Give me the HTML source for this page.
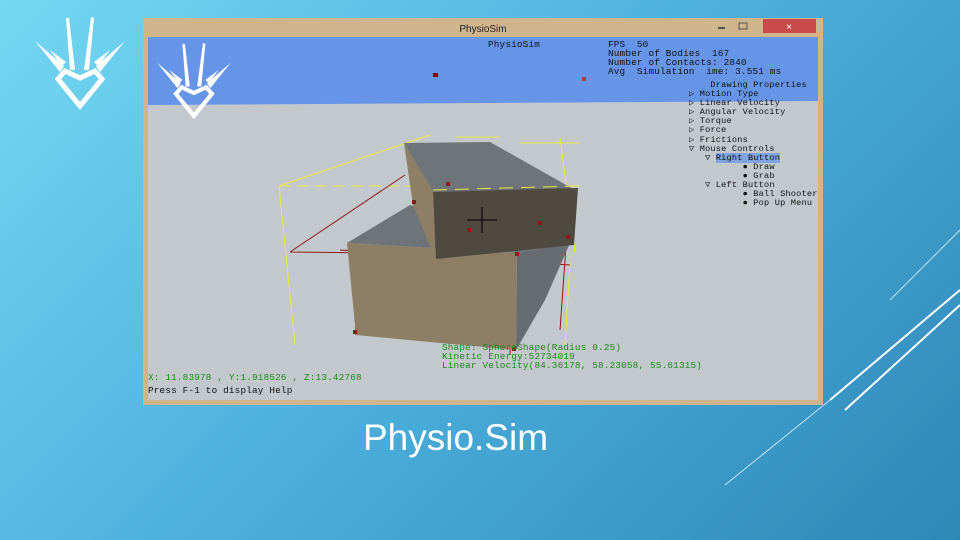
<!DOCTYPE html>
<html><head><style>
html,body{margin:0;padding:0}
body{width:960px;height:540px;overflow:hidden;position:relative;background:linear-gradient(135deg,#74d8f2 0%,#4fb3df 45%,#2f87b6 100%);font-family:"Liberation Sans",sans-serif}
.t{position:absolute;font-family:"Liberation Mono",monospace;font-size:9.3px;white-space:pre;line-height:9.1px;letter-spacing:0.2px}
</style></head><body>
<svg width="960" height="540" style="position:absolute;left:0;top:0">
<defs><g id="logo" fill="#fff" stroke="none">
<path d="M58 79 L65 71 L80 78 L95 71 L102 79 L80 106 Z" fill="none" stroke="#fff" stroke-width="5"/>
<polygon points="66,18 69,18 75,70 70,70"/>
<polygon points="91,17 94,18 89,70 84,70"/>
<polygon points="35,41 64,66 60,72"/>
<polygon points="125,41 96,66 100,72"/>
<polygon points="50,50 66,62 62,66"/>
<polygon points="110,50 94,62 98,66"/>
</g></defs>
<use href="#logo"/>
<g stroke="#fff" stroke-width="2" fill="none">
<path d="M960 290 L830 400 M960 305 L845 410"/>
</g>
<g stroke="#bfe6f5" stroke-width="1" fill="none">
<path d="M960 230 L890 300 M830 400 L725 485"/>
</g>
<rect x="143" y="18" width="680" height="387" fill="#d0b48c"/>
<rect x="763" y="19" width="53" height="14" fill="#c84a4a"/>
<text x="789" y="30" fill="#fff" font-size="10" text-anchor="middle" font-family="Liberation Sans">×</text>
<rect x="739" y="23" width="8" height="6" fill="none" stroke="#555" stroke-width="1"/>
<rect x="718" y="27" width="7" height="2" fill="#555"/>
<text x="483" y="32" fill="#222" font-size="10" text-anchor="middle" font-family="Liberation Sans">PhysioSim</text>
<rect x="148" y="37" width="670" height="363" fill="#c3c8cc"/>
<polygon points="148,37 818,37 818,101 148,105" fill="#6695e8"/>
<use href="#logo" transform="translate(157,43) scale(0.82) translate(-35,-17)"/>
<rect x="433" y="73" width="5" height="4" fill="#800"/>
<rect x="582" y="77" width="4" height="4" fill="#a44"/>
<g fill="none" stroke-width="1">
<path d="M279 186 L430 135 M279 186 L295 345 M560 138 L575 252 M570 262 L565 345" stroke="#e8e84a"/>
<path d="M279 186 L580 186 M279 186 L320 186" stroke="#e8e84a" stroke-dasharray="12,6"/>
<path d="M290 252 L560 255 M405 175 L290 252 M570 190 L560 330 M513 260 L510 355 M352 245 L356 335" stroke="#8b1a1a"/>
<path d="M340 250 L570 265" stroke="#8b1a1a" stroke-dasharray="14,6"/>
<path d="M520 143 L580 143 M455 137 L500 137" stroke="#e8e84a"/>
</g>
<polygon points="347,243 410,205 570,243 517,253" fill="#6e7478"/>
<polygon points="347,243 517,253 516,350 356,335" fill="#8e7e65"/>
<polygon points="517,253 570,243 545,300 516,350" fill="#676c70"/>
<polygon points="404,143 490,142 575,190 433,192" fill="#6e7478"/>
<polygon points="404,143 433,192 436,260 413,205" fill="#8e7e65"/>
<polygon points="433,192 578,188 574,245 436,259" fill="#4f4a40"/>
<path d="M433 190 L578 186" stroke="#e8e84a" stroke-dasharray="14,8" fill="none"/>
<path d="M467 220 L497 220 M482 207 L482 233" stroke="#000" stroke-width="1"/>
<g fill="#8b1a1a"><rect x="446" y="182" width="4" height="4"/><rect x="467" y="228" width="4" height="4"/><rect x="538" y="221" width="4" height="4"/><rect x="566" y="235" width="4" height="4"/><rect x="515" y="252" width="4" height="4"/><rect x="353" y="330" width="4" height="4"/><rect x="512" y="347" width="4" height="4"/><rect x="412" y="200" width="4" height="4"/></g>
</svg>
<div class="t" style="left:488px;top:40px;color:#111">PhysioSim</div>
<div class="t" style="left:608px;top:40px;color:#111">FPS  50
Number of Bodies  167
Number of Contacts: 2840
Avg  Simulation  ime: 3.551 ms</div>
<div class="t" style="left:689px;top:81px;color:#111;font-size:8.6px">    Drawing Properties
▷ Motion Type
▷ Linear Velocity
▷ Angular Velocity
▷ Torque
▷ Force
▷ Frictions
▽ Mouse Controls
   ▽ <span style="background:#7fa3e0">Right Button</span>
          ● Draw
          ● Grab
   ▽ Left Button
          ● Ball Shooter
          ● Pop Up Menu</div>
<div class="t" style="left:442px;top:343px;color:#1a8a1a">Shape: SphereShape(Radius 0.25)
Kinetic Energy:52734019
Linear Velocity(84.36178, 58.23058, 55.61315)</div>
<div class="t" style="left:148px;top:373px;color:#1a8a1a">X: 11.83978 , Y:1.918526 , Z:13.42768</div>
<div class="t" style="left:148px;top:386px;color:#111">Press F-1 to display Help</div>
<div style="position:absolute;left:363px;top:417px;font-size:37px;color:#fff">Physio.Sim</div>
</body></html>
